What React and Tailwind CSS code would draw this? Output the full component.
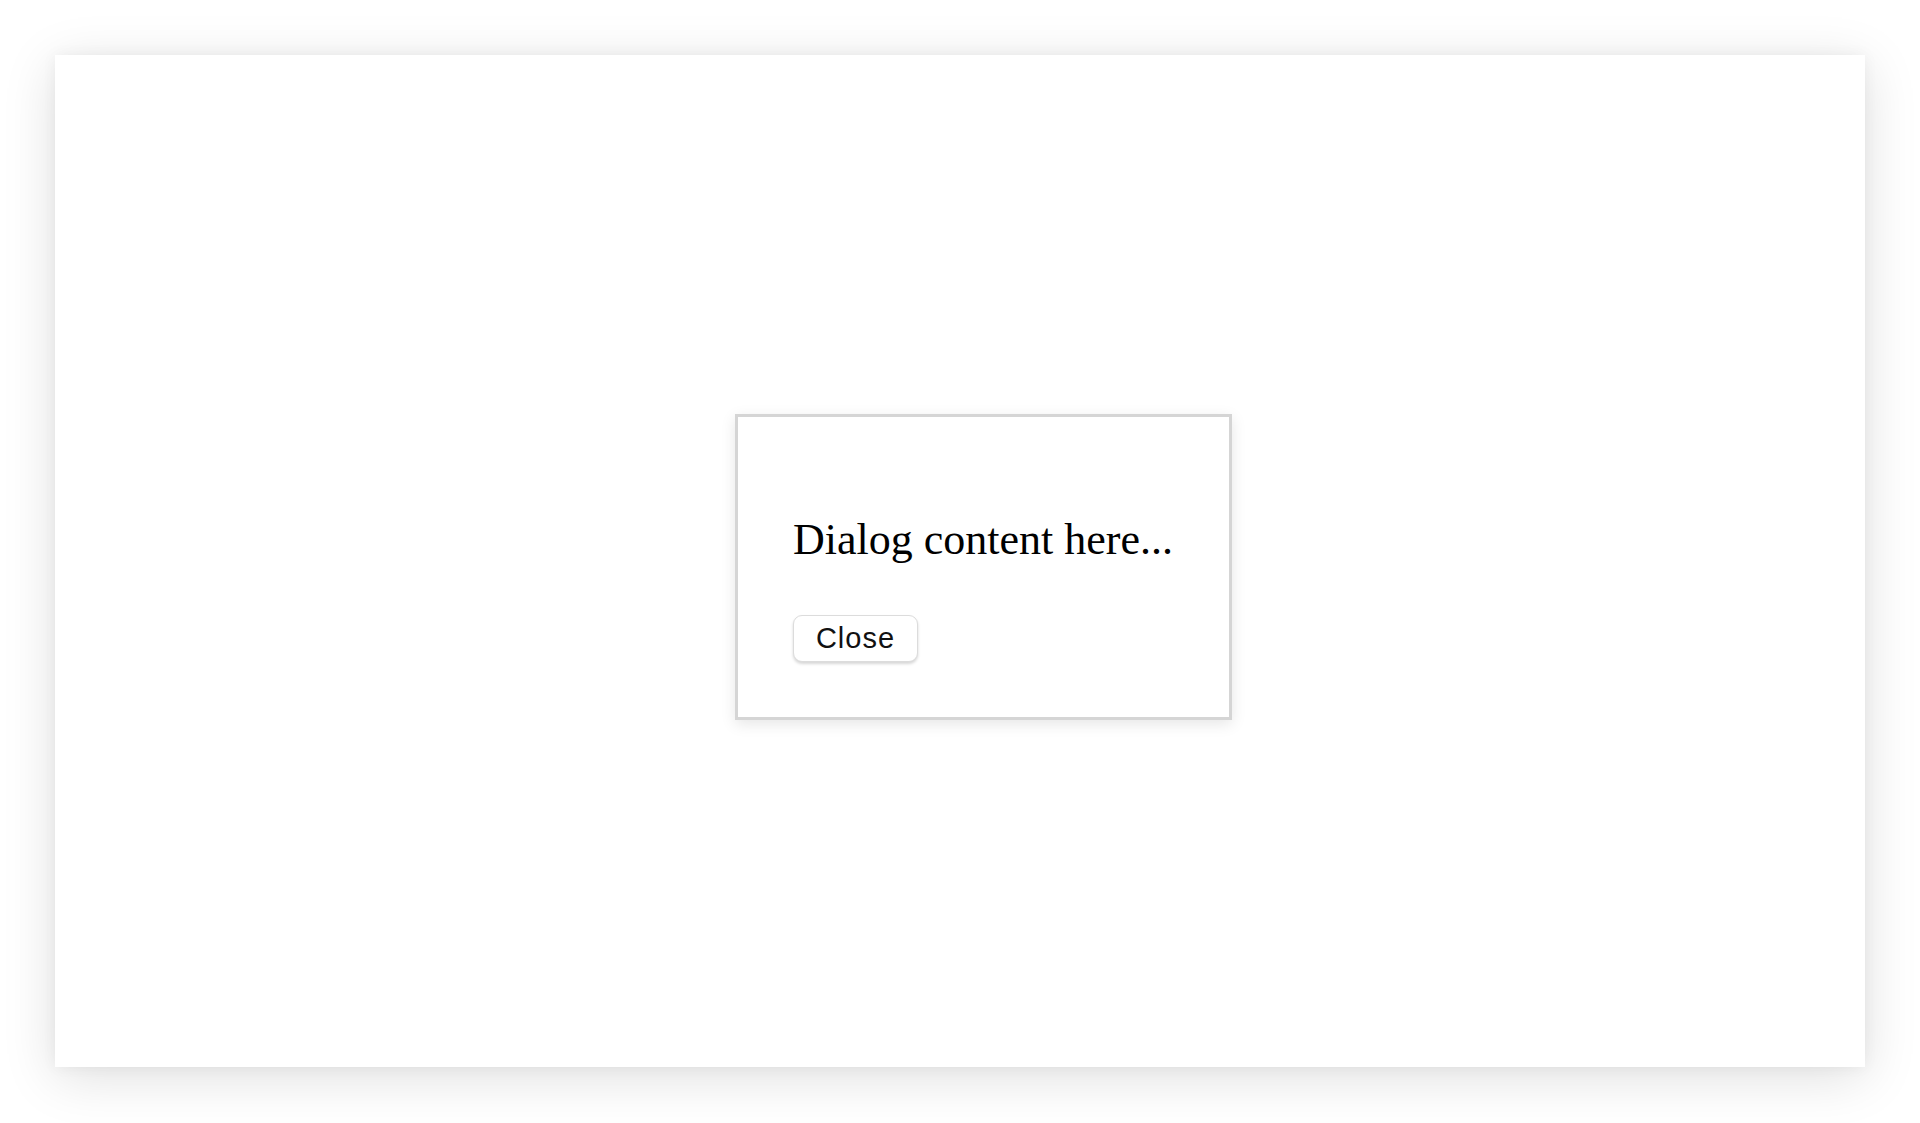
export default function App() {
  return (
    <div className="w-full h-[1123px] bg-white p-[55px] pb-[56px]">
      <div className="h-full w-full bg-white shadow-[0_10px_50px_rgba(0,0,0,0.13),0_0_14px_rgba(0,0,0,0.05)] pl-[680px] pt-[359px]">
        <div className="w-[497px] h-[306px] bg-white border-[3px] border-[#d5d5d5] shadow-[0_4px_14px_rgba(0,0,0,0.10)] pl-[55px] pt-[99px]">
          <p
            className="text-[44px] leading-[48px] text-black whitespace-nowrap"
            style={{ fontFamily: '"Liberation Serif", "Times New Roman", serif' }}
          >
            Dialog content here...
          </p>
          <button
            className="mt-[51px] w-[125px] h-[47px] flex items-center justify-center rounded-[9px] border border-[#dcdcdc] bg-white shadow-[0_2px_3px_rgba(0,0,0,0.16)] text-[29px] tracking-[1px] text-[#111]"
            style={{ fontFamily: '"Liberation Sans", Arial, sans-serif' }}
          >
            Close
          </button>
        </div>
      </div>
    </div>
  );
}
